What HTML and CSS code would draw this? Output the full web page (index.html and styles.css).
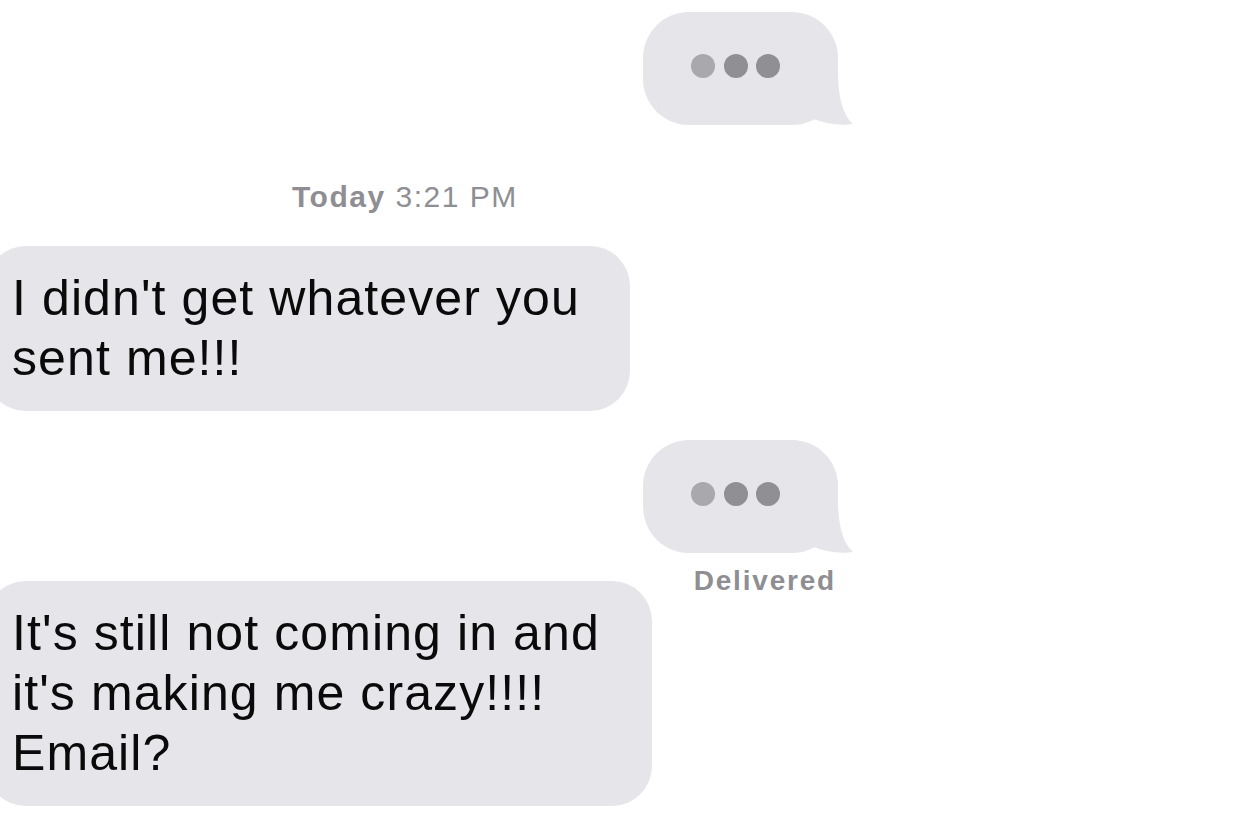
FILE: index.html
```html
<!DOCTYPE html>
<html lang="en">
<head>
  <meta charset="UTF-8">
  <title>Messages</title>
  <link rel="stylesheet" href="styles.css">
</head>
<body>
  <div class="feed">
    <div class="typing">
      <svg width="212" height="116" viewBox="0 0 212 116">
        <rect x="0" y="0" width="195" height="113" rx="46" fill="#e5e5ea"/>
        <path d="M195 64 Q196 100 210 112 Q190 115 168 106 Z" fill="#e5e5ea"/>
        <circle cx="60" cy="54" r="12" fill="#a8a8ad"/>
        <circle cx="93" cy="54" r="12" fill="#8f8f94"/>
        <circle cx="125" cy="54" r="12" fill="#8f8f94"/>
      </svg>
    </div>

    <p class="stamp"><b>Today</b> 3:21 PM</p>

    <div class="bubble first">I didn't get whatever you<br>sent me!!!</div>

    <div class="typing second">
      <svg width="212" height="116" viewBox="0 0 212 116">
        <rect x="0" y="0" width="195" height="113" rx="46" fill="#e5e5ea"/>
        <path d="M195 64 Q196 100 210 112 Q190 115 168 106 Z" fill="#e5e5ea"/>
        <circle cx="60" cy="54" r="12" fill="#a8a8ad"/>
        <circle cx="93" cy="54" r="12" fill="#8f8f94"/>
        <circle cx="125" cy="54" r="12" fill="#8f8f94"/>
      </svg>
      <span class="status">Delivered</span>
    </div>

    <div class="bubble last">It's still not coming in and<br>it's making me crazy!!!!<br>Email?</div>
  </div>
</body>
</html>
```

FILE: styles.css
```css
body {
  margin: 0;
  background-color: #fff;
  font-family: 'Liberation Sans', Arial, sans-serif;
  overflow: hidden;
}

.feed {
  display: flex;
  flex-direction: column;
  align-items: flex-start;
  padding-top: 12px;
}

.typing {
  display: flex;
  flex-direction: column;
  margin-left: 643px;
}

.typing svg {
  display: block;
}

.typing.second {
  margin-top: 29px;
}

.status {
  width: 193px;
  margin-top: 10px;
  text-align: right;
  font-size: 28px;
  line-height: 30px;
  font-weight: bold;
  letter-spacing: 1.8px;
  color: #8e8e93;
}

.stamp {
  margin: 52px 0 0 292px;
  font-size: 30px;
  line-height: 34px;
  letter-spacing: 1.5px;
  color: #8e8e93;
}

.bubble {
  margin-left: -14px;
  padding: 22px 50px 23px 26px;
  background-color: #e5e5ea;
  border-radius: 40px;
  font-size: 50px;
  line-height: 60px;
  letter-spacing: 1.1px;
  color: #0a0a0a;
  white-space: nowrap;
}

.bubble.first {
  margin-top: 32px;
}

.bubble.last {
  margin-top: -15px;
  padding-right: 52px;
}
```
